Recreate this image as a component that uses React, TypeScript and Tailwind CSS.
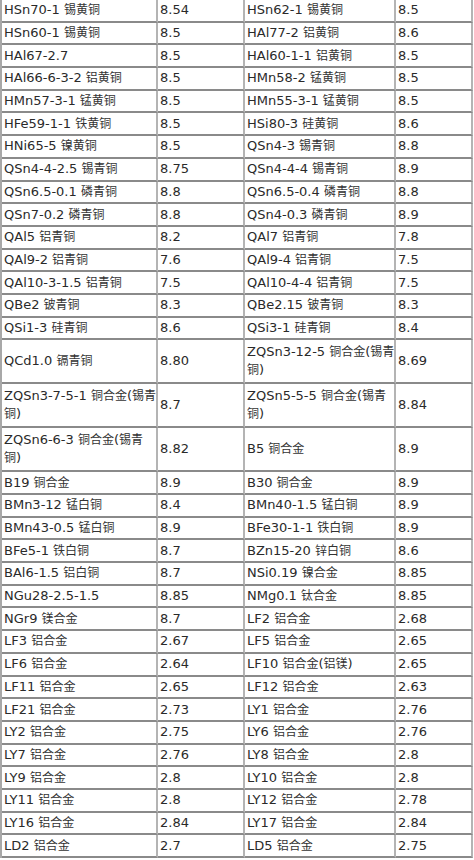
import React from "react";

type Row = [string, string, string, string, boolean?];

const rows: Row[] = [
  ["HSn70-1 锡黄铜", "8.54", "HSn62-1 锡黄铜", "8.5"],
  ["HSn60-1 锡黄铜", "8.5", "HAl77-2 铝黄铜", "8.6"],
  ["HAl67-2.7", "8.5", "HAl60-1-1 铝黄铜", "8.5"],
  ["HAl66-6-3-2 铝黄铜", "8.5", "HMn58-2 锰黄铜", "8.5"],
  ["HMn57-3-1 锰黄铜", "8.5", "HMn55-3-1 锰黄铜", "8.5"],
  ["HFe59-1-1 铁黄铜", "8.5", "HSi80-3 硅黄铜", "8.6"],
  ["HNi65-5 镍黄铜", "8.5", "QSn4-3 锡青铜", "8.8"],
  ["QSn4-4-2.5 锡青铜", "8.75", "QSn4-4-4 锡青铜", "8.9"],
  ["QSn6.5-0.1 磷青铜", "8.8", "QSn6.5-0.4 磷青铜", "8.8"],
  ["QSn7-0.2 磷青铜", "8.8", "QSn4-0.3 磷青铜", "8.9"],
  ["QAl5 铝青铜", "8.2", "QAl7 铝青铜", "7.8"],
  ["QAl9-2 铝青铜", "7.6", "QAl9-4 铝青铜", "7.5"],
  ["QAl10-3-1.5 铝青铜", "7.5", "QAl10-4-4 铝青铜", "7.5"],
  ["QBe2 铍青铜", "8.3", "QBe2.15 铍青铜", "8.3"],
  ["QSi1-3 硅青铜", "8.6", "QSi3-1 硅青铜", "8.4"],
  ["QCd1.0 镉青铜", "8.80", "ZQSn3-12-5 铜合金(锡青\n铜)", "8.69", true],
  ["ZQSn3-7-5-1 铜合金(锡青\n铜)", "8.7", "ZQSn5-5-5 铜合金(锡青\n铜)", "8.84", true],
  ["ZQSn6-6-3 铜合金(锡青\n铜)", "8.82", "B5 铜合金", "8.9", true],
  ["B19 铜合金", "8.9", "B30 铜合金", "8.9"],
  ["BMn3-12 锰白铜", "8.4", "BMn40-1.5 锰白铜", "8.9"],
  ["BMn43-0.5 锰白铜", "8.9", "BFe30-1-1 铁白铜", "8.9"],
  ["BFe5-1 铁白铜", "8.7", "BZn15-20 锌白铜", "8.6"],
  ["BAl6-1.5 铝白铜", "8.7", "NSi0.19 镍合金", "8.85"],
  ["NGu28-2.5-1.5", "8.85", "NMg0.1 钛合金", "8.85"],
  ["NGr9 镁合金", "8.7", "LF2 铝合金", "2.68"],
  ["LF3 铝合金", "2.67", "LF5 铝合金", "2.65"],
  ["LF6 铝合金", "2.64", "LF10 铝合金(铝镁)", "2.65"],
  ["LF11 铝合金", "2.65", "LF12 铝合金", "2.63"],
  ["LF21 铝合金", "2.73", "LY1 铝合金", "2.76"],
  ["LY2 铝合金", "2.75", "LY6 铝合金", "2.76"],
  ["LY7 铝合金", "2.76", "LY8 铝合金", "2.8"],
  ["LY9 铝合金", "2.8", "LY10 铝合金", "2.8"],
  ["LY11 铝合金", "2.8", "LY12 铝合金", "2.78"],
  ["LY16 铝合金", "2.84", "LY17 铝合金", "2.84"],
  ["LD2 铝合金", "2.7", "LD5 铝合金", "2.75"],
];

// chinese glyphs sit a bit smaller than the latin text in the source
const renderText = (text: string) =>
  text.split(/([\u4e00-\u9fff]+)/).map((part, i) =>
    /[\u4e00-\u9fff]/.test(part) ? (
      <span key={i} className="text-[12px] text-[#333]">
        {part}
      </span>
    ) : (
      <React.Fragment key={i}>{part}</React.Fragment>
    )
  );

const Cell = ({ text, tall }: { text: string; tall?: boolean }) => (
  <div
    className={`flex items-center whitespace-pre pl-[2px] border-b-2 border-b-[#8a8a8a] border-r-2 border-r-[#b4b4b4] ${
      tall ? "h-[44px]" : "h-[22.7px]"
    }`}
  >
    <span>{renderText(text)}</span>
  </div>
);

export default function App() {
  return (
    <div className="w-[474px] h-[860px] bg-white overflow-hidden">
      <div
        className="grid grid-cols-[156px_87px_151px_77px] w-[471px] border-l-2 border-l-[#a8a8a8] text-[13px] leading-[18px] text-[#2a2a2a]"
        style={{ fontFamily: '"DejaVu Sans", "Noto Sans CJK SC", sans-serif' }}
      >
        {rows.map((r, i) => (
          <React.Fragment key={i}>
            <Cell text={r[0]} tall={r[4]} />
            <Cell text={r[1]} tall={r[4]} />
            <Cell text={r[2]} tall={r[4]} />
            <Cell text={r[3]} tall={r[4]} />
          </React.Fragment>
        ))}
      </div>
    </div>
  );
}
